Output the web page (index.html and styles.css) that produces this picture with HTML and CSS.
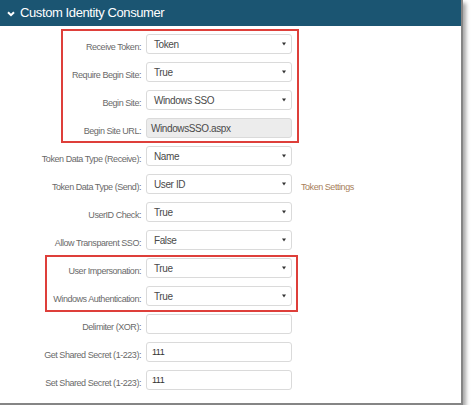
FILE: index.html
```html
<!DOCTYPE html>
<html>
<head>
<meta charset="utf-8">
<link rel="stylesheet" href="styles.css">
</head>
<body>
<div class="panel">
  <div class="panel-head">
    <svg class="chev" width="8" height="6" viewBox="0 0 8 6"><path d="M1 1.2 L4 4.2 L7 1.2" fill="none" stroke="#fff" stroke-width="2"/></svg>
    <span class="title">Custom Identity Consumer</span>
  </div>
  <div class="form">
    <div class="group group-a">
      <div class="row"><label class="lbl">Receive Token:</label><div class="sel"><span>Token</span><svg class="arr" width="4" height="4" viewBox="0 0 4 4"><path d="M0 0.5H4L2 3.5Z" fill="#333"/></svg></div></div>
      <div class="row"><label class="lbl">Require Begin Site:</label><div class="sel"><span>True</span><svg class="arr" width="4" height="4" viewBox="0 0 4 4"><path d="M0 0.5H4L2 3.5Z" fill="#333"/></svg></div></div>
      <div class="row"><label class="lbl">Begin Site:</label><div class="sel"><span>Windows SSO</span><svg class="arr" width="4" height="4" viewBox="0 0 4 4"><path d="M0 0.5H4L2 3.5Z" fill="#333"/></svg></div></div>
      <div class="row"><label class="lbl">Begin Site URL:</label><div class="inp disabled"><span>WindowsSSO.aspx</span></div></div>
    </div>
    <div class="row"><label class="lbl">Token Data Type (Receive):</label><div class="sel"><span>Name</span><svg class="arr" width="4" height="4" viewBox="0 0 4 4"><path d="M0 0.5H4L2 3.5Z" fill="#333"/></svg></div></div>
    <div class="row"><label class="lbl">Token Data Type (Send):</label><div class="sel"><span>User ID</span><svg class="arr" width="4" height="4" viewBox="0 0 4 4"><path d="M0 0.5H4L2 3.5Z" fill="#333"/></svg></div><a class="link">Token Settings</a></div>
    <div class="row"><label class="lbl">UserID Check:</label><div class="sel"><span>True</span><svg class="arr" width="4" height="4" viewBox="0 0 4 4"><path d="M0 0.5H4L2 3.5Z" fill="#333"/></svg></div></div>
    <div class="row"><label class="lbl">Allow Transparent SSO:</label><div class="sel"><span>False</span><svg class="arr" width="4" height="4" viewBox="0 0 4 4"><path d="M0 0.5H4L2 3.5Z" fill="#333"/></svg></div></div>
    <div class="group group-b">
      <div class="row"><label class="lbl">User Impersonation:</label><div class="sel"><span>True</span><svg class="arr" width="4" height="4" viewBox="0 0 4 4"><path d="M0 0.5H4L2 3.5Z" fill="#333"/></svg></div></div>
      <div class="row"><label class="lbl">Windows Authentication:</label><div class="sel"><span>True</span><svg class="arr" width="4" height="4" viewBox="0 0 4 4"><path d="M0 0.5H4L2 3.5Z" fill="#333"/></svg></div></div>
    </div>
    <div class="row"><label class="lbl">Delimiter (XOR):</label><div class="inp"><span></span></div></div>
    <div class="row"><label class="lbl">Get Shared Secret (1-223):</label><div class="inp num"><span>111</span></div></div>
    <div class="row"><label class="lbl">Set Shared Secret (1-223):</label><div class="inp num"><span>111</span></div></div>
  </div>
</div>
</body>
</html>
```

FILE: styles.css
```css
html, body {
  margin: 0;
  padding: 0;
  background: #fff;
}
body {
  font-family: "Liberation Sans", Arial, sans-serif;
}
.panel {
  width: 461px;
  background: #fff;
  border-right: 2px solid #858585;
  border-bottom: 2px solid #858585;
  box-shadow: 3px 3px 4px rgba(0, 0, 0, 0.35);
}
.panel-head {
  height: 26px;
  background: #1b5572;
  display: flex;
  align-items: center;
  padding-left: 7px;
  gap: 5px;
}
.chev {
  display: block;
  margin-top: 1px;
}
.title {
  color: #fff;
  font-size: 13px;
  letter-spacing: -0.4px;
  line-height: 26px;
}
.form {
  display: flex;
  flex-direction: column;
  gap: 8px;
  padding: 8px 0 13px;
}
.group {
  display: flex;
  flex-direction: column;
  gap: 8px;
  position: relative;
}
.group::after {
  content: "";
  position: absolute;
  border: 2px solid #de3f3a;
  pointer-events: none;
}
.group-a::after {
  top: -5px;
  bottom: -5px;
  left: 61px;
  width: 234px;
}
.group-b::after {
  top: -3px;
  bottom: -6px;
  left: 45px;
  width: 249px;
}
.row {
  display: grid;
  grid-template-columns: 141px 146px auto;
  column-gap: 5px;
  height: 20px;
}
.lbl {
  text-align: right;
  font-size: 9px;
  letter-spacing: -0.45px;
  color: #6a6a6a;
  line-height: 14px;
  padding-top: 6px;
  white-space: nowrap;
}
.sel, .inp {
  box-sizing: border-box;
  height: 20px;
  border: 1px solid #dadada;
  border-radius: 3px;
  background: #fff;
  display: flex;
  align-items: center;
  color: #4a4a4a;
  font-size: 10px;
  letter-spacing: -0.4px;
  white-space: nowrap;
}
.sel {
  padding: 0 5px 0 7px;
  justify-content: space-between;
}
.inp {
  padding: 0 4px;
}
.inp.disabled {
  background: #ececec;
  padding-left: 4px;
}
.inp.num {
  font-size: 9px;
  letter-spacing: -0.5px;
  padding-left: 5px;
  color: #333;
}
.arr {
  display: block;
}
.link {
  font-size: 9px;
  letter-spacing: -0.45px;
  color: #a8805a;
  line-height: 14px;
  padding-top: 6px;
  margin-left: 4px;
  white-space: nowrap;
}
```
